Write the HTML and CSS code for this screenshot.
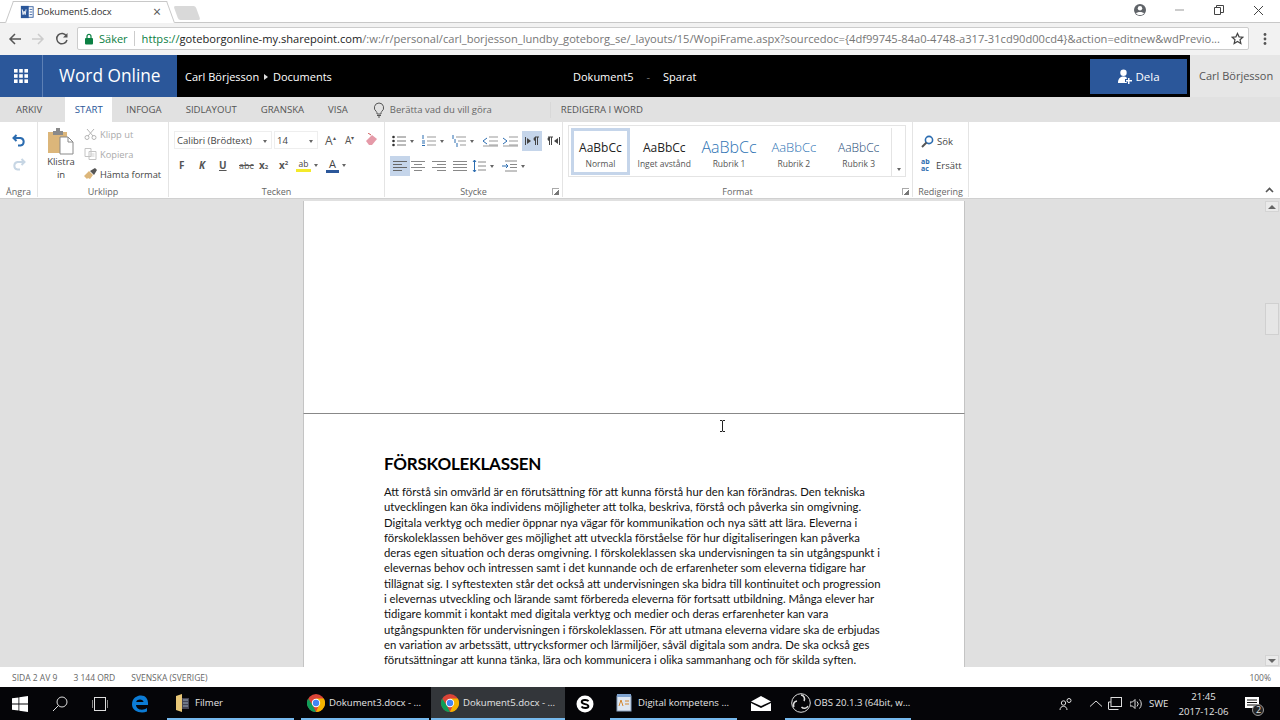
FILE: index.html
```html
<!DOCTYPE html>
<html lang="sv">
<head>
    <meta charset="UTF-8">
    <title>Dokument5.docx</title>
    <link rel="stylesheet" href="styles.css">
</head>
<body>
    <div class="tabstrip">
        <div class="tab">
            <svg class="tab-icon" width="14" height="14" viewBox="0 0 16 16"><rect x="5" y="2" width="10" height="12" fill="#fff" stroke="#2b579a"/><path d="M11 5h3M11 8h3M11 11h3" stroke="#2b579a"/><rect x="1" y="1" width="9" height="14" fill="#2b579a"/><path d="M2.500 5l1 6 1.200-4 1.200 4 1-6" fill="none" stroke="#fff"/></svg>
            <span class="tab-title">Dokument5.docx</span>
            <span class="tab-close">×</span>
        </div>
        <div class="tab-new"></div>
        <div class="win-buttons">
            <svg class="win-user" width="14" height="14" viewBox="0 0 14 14"><circle cx="7" cy="7" r="6" fill="#5f6368"/><circle cx="7" cy="5.200" r="2.200" fill="#fff"/><path d="M3 10.500c1-2 7-2 8 0-2 2-6 2-8 0z" fill="#fff"/></svg>
            <svg class="win-min" width="10" height="10" viewBox="0 0 10 10"><path d="M0 5h9" stroke="#999"/></svg>
            <svg class="win-max" width="10" height="10" viewBox="0 0 10 10"><path d="M.5 2.500h6v7h-6zM2.500 2.500v-2h7v7h-3" fill="none" stroke="#444"/></svg>
            <svg class="win-close" width="11" height="11" viewBox="0 0 11 11"><path d="M1 1l9 9M10 1l-9 9" stroke="#444"/></svg>
        </div>
    </div>

    <div class="toolbar">
        <svg width="14" height="14" viewBox="0 0 14 14"><path d="M13 7H2M7 2L2 7l5 5" fill="none" stroke="#555" stroke-width="1.500"/></svg>
        <svg class="nav-forward" width="14" height="14" viewBox="0 0 14 14"><path d="M1 7h11M7 2l5 5-5 5" fill="none" stroke="#ccc" stroke-width="1.500"/></svg>
        <svg class="nav-reload" width="14" height="14" viewBox="0 0 14 14"><path d="M11.500 4A5.200 5.200 0 1 0 12 8" fill="none" stroke="#555" stroke-width="1.500"/><path d="M12.500 1v4.500H8z" fill="#555"/></svg>
        <div class="omnibox">
            <svg width="10" height="12" viewBox="0 0 10 12"><rect x="1" y="5" width="8" height="6.500" rx="1" fill="#0b8043"/><path d="M3 5V3.400a2 2 0 0 1 4 0V5" fill="none" stroke="#0b8043" stroke-width="1.200"/></svg>
            <span class="secure">Säker</span>
            <span class="omni-sep"></span>
            <span class="url"><span class="url-https">https://</span><span class="url-host">goteborgonline-my.sharepoint.com</span>/:w:/r/personal/carl_borjesson_lundby_goteborg_se/_layouts/15/WopiFrame.aspx?sourcedoc={4df99745-84a0-4748-a317-31cd90d00cd4}&amp;action=editnew&amp;wdPrevio...</span>
            <svg width="13" height="13" viewBox="0 0 14 14"><path d="M7 1.500l1.700 3.700 4 .4-3 2.700.9 4-3.600-2.100-3.600 2.100.9-4-3-2.700 4-.4z" fill="none" stroke="#444" stroke-width="1.300"/></svg>
        </div>
        <svg class="nav-menu" width="4" height="14" viewBox="0 0 4 14"><circle cx="2" cy="2.500" r="1.400" fill="#555"/><circle cx="2" cy="7" r="1.400" fill="#555"/><circle cx="2" cy="11.500" r="1.400" fill="#555"/></svg>
    </div>

    <header class="appbar">
        <div class="waffle">
            <svg width="14" height="14" viewBox="0 0 14 14" fill="#fff"><rect width="3.600" height="3.600"/><rect x="5.200" width="3.600" height="3.600"/><rect x="10.400" width="3.600" height="3.600"/><rect y="5.200" width="3.600" height="3.600"/><rect x="5.200" y="5.200" width="3.600" height="3.600"/><rect x="10.400" y="5.200" width="3.600" height="3.600"/><rect y="10.400" width="3.600" height="3.600"/><rect x="5.200" y="10.400" width="3.600" height="3.600"/><rect x="10.400" y="10.400" width="3.600" height="3.600"/></svg>
        </div>
        <div class="brand">Word Online</div>
        <div class="crumbs">Carl Börjesson <span class="crumb-arrow"></span> Documents</div>
        <div class="doc-state"><span>Dokument5</span><span class="state-dash">-</span><span>Sparat</span></div>
        <div class="share">
            <svg width="15" height="15" viewBox="0 0 15 15" fill="#fff"><circle cx="6.500" cy="3.800" r="3.200"/><path d="M1 14c0-4 2-6.500 5.500-6.500 1.500 0 2.500.5 3.300 1.200V10H8v3h1.800v1z"/><path d="M11 9h1.500v2H15v1.500h-2.500V15H11v-2.500H9V11h2z"/></svg>
            Dela
        </div>
        <div class="user">Carl Börjesson</div>
    </header>

    <nav class="ribbon-tabs">
        <span class="rtab">ARKIV</span>
        <span class="rtab rtab-active">START</span>
        <span class="rtab">INFOGA</span>
        <span class="rtab">SIDLAYOUT</span>
        <span class="rtab">GRANSKA</span>
        <span class="rtab">VISA</span>
        <span class="tell">
            <svg width="12" height="16" viewBox="0 0 12 16"><path d="M6 1a4.700 4.700 0 0 0-2.700 8.500c.7.600.7 1.500.7 2.500h4c0-1 0-1.900.7-2.500A4.700 4.700 0 0 0 6 1zM4 13.500h4M5 15h2" fill="none" stroke="#555"/></svg>
            Berätta vad du vill göra
        </span>
        <span class="rtab rtab-word">REDIGERA I WORD</span>
    </nav>

    <section class="ribbon">
        <div class="group g-undo">
            <div class="group-body undo-body">
                <svg width="14" height="13" viewBox="0 0 14 13"><path d="M4.500 1L1.500 4l3 3M2 4h6.500a3.800 3.800 0 0 1 0 7.500H6" fill="none" stroke="#2b6cb0" stroke-width="2"/></svg>
                <svg width="14" height="13" viewBox="0 0 14 13"><path d="M9.500 1l3 3-3 3M12 4H5.500a3.800 3.800 0 0 0 0 7.500H8" fill="none" stroke="#c7d6e4" stroke-width="2"/></svg>
            </div>
            <div class="group-label">Ångra</div>
        </div>
        <div class="group g-clip">
            <div class="group-body clip-body">
                <div class="paste">
                    <svg width="28" height="27" viewBox="0 0 28 27"><path d="M1 4h19v21H1z" fill="#dcb67a"/><path d="M6 3h3V0h4v3h3v4H6z" fill="#8a8a8a"/><path d="M13 9h8l5 5v12H13z" fill="#fff" stroke="#8a8a8a"/><path d="M21 9v5h5" fill="none" stroke="#8a8a8a"/></svg>
                    <span>Klistra<br>in</span>
                </div>
                <div class="clip-list">
                    <div class="clip-item clip-off"><svg width="14" height="12" viewBox="0 0 14 12"><circle cx="3" cy="9.500" r="2" fill="none" stroke="#b5b5b5"/><circle cx="10" cy="9.500" r="2" fill="none" stroke="#b5b5b5"/><path d="M4 8l6-7M9 8L3 1" stroke="#b5b5b5"/></svg>Klipp ut</div>
                    <div class="clip-item clip-off"><svg width="14" height="12" viewBox="0 0 14 12"><path d="M1 .5h6v8H1zM5 3.500h7v8H5z" fill="#fff" stroke="#c4c4c4"/><path d="M6.500 6h4M6.500 8h4" stroke="#d0d0d0"/></svg>Kopiera</div>
                    <div class="clip-item"><svg width="14" height="12" viewBox="0 0 14 12"><path d="M0 8l5-5 4 4-3 4-2-1-1 1z" fill="#dcb67a"/><path d="M6 3l4 4 3-5-2-2z" fill="#555"/></svg>Hämta format</div>
                </div>
            </div>
            <div class="group-label">Urklipp</div>
        </div>
        <div class="group g-font">
            <div class="group-body font-body">
                <div class="tool-row">
                    <span class="combo combo-font">Calibri (Brödtext)<i class="caret"></i></span>
                    <span class="combo combo-size">14<i class="caret"></i></span>
                    <span class="grow-btn">A<sup>▴</sup></span>
                    <span class="shrink-btn">A<sup>▾</sup></span>
                    <svg width="14" height="14" viewBox="0 0 14 14"><path d="M1 8l6-6 5 4-5 6H4z" fill="#e59aa8"/><path d="M6 2L3 0" stroke="#c55"/></svg>
                </div>
                <div class="tool-row fmt-row">
                    <b class="fmt">F</b>
                    <b class="fmt"><i>K</i></b>
                    <b class="fmt"><u>U</u></b>
                    <span class="fmt fmt-strike">abc</span>
                    <b class="fmt">x<small>2</small></b>
                    <b class="fmt">x<sup>2</sup></b>
                    <span class="fmt-color fmt-mark"><span class="mark-glyph">ab</span><i class="caret"></i></span>
                    <span class="fmt-color"><span class="font-color">A</span><i class="caret"></i></span>
                </div>
            </div>
            <div class="group-label">Tecken</div>
        </div>
        <div class="group g-para">
            <div class="group-body para-body">
                <div class="tool-row para-row para-row-a">
                    <span class="para-btn"><svg width="14" height="12" viewBox="0 0 14 12"><path d="M5 2h9M5 6h9M5 10h9" stroke="#777"/><circle cx="1.500" cy="2" r="1.300" fill="#333"/><circle cx="1.500" cy="6" r="1.300" fill="#333"/><circle cx="1.500" cy="10" r="1.300" fill="#333"/></svg><i class="caret"></i></span>
                    <span class="para-btn"><svg width="14" height="12" viewBox="0 0 14 12"><path d="M5 2h9M5 6h9M5 10h9" stroke="#999"/><path d="M1 0v4M0 6h3M0 8h3M0 10.500h3" stroke="#2b6cb0"/></svg><i class="caret"></i></span>
                    <span class="para-btn"><svg width="14" height="12" viewBox="0 0 14 12"><path d="M4 2h10M6 6h8M8 10h6" stroke="#999"/><path d="M1 0v4M3 4v4M5 8v4" stroke="#2b6cb0"/></svg><i class="caret"></i></span>
                    <svg class="para-ico" width="16" height="12" viewBox="0 0 16 12"><path d="M7 2h9M7 6h9M7 10h9M1 11h15" stroke="#999"/><path d="M5 3L1 6l4 3" fill="none" stroke="#2b6cb0"/></svg>
                    <svg class="para-ico" width="16" height="12" viewBox="0 0 16 12"><path d="M7 2h9M7 6h9M7 10h9M1 11h15" stroke="#999"/><path d="M1 3l4 3-4 3" fill="none" stroke="#2b6cb0"/></svg>
                    <span class="para-on"><svg width="14" height="10" viewBox="0 0 14 10"><path d="M.5 1v8" stroke="#444"/><path d="M2 2l4 3-4 3z" fill="#444"/><path d="M10 1h4M10.500 1v8M12.500 1v8" stroke="#444"/><path d="M10.500 1a2 2 0 0 0 0 4z" fill="#444"/></svg></span>
                    <svg class="para-rtl" width="14" height="10" viewBox="0 0 14 10"><path d="M13.500 1v8" stroke="#444"/><path d="M12 2L8 5l4 3z" fill="#444"/><path d="M2 1h5M3.500 1v8M5.500 1v8" stroke="#444"/><path d="M3.500 1a2 2 0 0 0 0 4z" fill="#444"/></svg>
                </div>
                <div class="tool-row para-row para-row-b">
                    <span class="para-on"><svg width="14" height="12" viewBox="0 0 14 12"><path d="M0 1.500h14M0 4.500h9M0 7.500h14M0 10.500h9" stroke="#666"/></svg></span>
                    <svg class="para-ico" width="14" height="12" viewBox="0 0 14 12"><path d="M0 1.500h14M3 4.500h8M0 7.500h14M3 10.500h8" stroke="#888"/></svg>
                    <svg class="para-ico" width="14" height="12" viewBox="0 0 14 12"><path d="M0 1.500h14M5 4.500h9M0 7.500h14M5 10.500h9" stroke="#888"/></svg>
                    <svg class="para-ico" width="14" height="12" viewBox="0 0 14 12"><path d="M0 1.500h14M0 4.500h14M0 7.500h14M0 10.500h14" stroke="#888"/></svg>
                    <span class="para-btn para-spacing"><svg width="14" height="14" viewBox="0 0 14 14"><path d="M6 3h8M6 7h8M6 11h8" stroke="#888"/><path d="M2.500 1v12M1 3l1.500-2L4 3M1 11l1.500 2L4 11" fill="none" stroke="#2b6cb0"/></svg><i class="caret"></i></span>
                    <span class="para-btn"><svg width="15" height="12" viewBox="0 0 15 12"><path d="M3 1h12M8 4.500h7M8 7.500h7M3 11h12" stroke="#888"/><path d="M0 6h6M4 4l2 2-2 2" fill="none" stroke="#2b6cb0"/></svg><i class="caret"></i></span>
                </div>
            </div>
            <div class="group-label">Stycke<span class="launcher"></span></div>
        </div>
        <div class="group g-styles">
            <div class="group-body styles-body">
                <div class="gallery">
                    <div class="style-item style-on"><span class="sample">AaBbCc</span><span class="style-name">Normal</span></div>
                    <div class="style-item"><span class="sample">AaBbCc</span><span class="style-name">Inget avstånd</span></div>
                    <div class="style-item"><span class="sample s-h1">AaBbCc</span><span class="style-name">Rubrik 1</span></div>
                    <div class="style-item"><span class="sample s-h2">AaBbCc</span><span class="style-name">Rubrik 2</span></div>
                    <div class="style-item"><span class="sample s-h3">AaBbCc</span><span class="style-name">Rubrik 3</span></div>
                    <div class="gallery-more"><i class="caret"></i></div>
                </div>
            </div>
            <div class="group-label">Format<span class="launcher"></span></div>
        </div>
        <div class="group g-edit">
            <div class="group-body edit-body">
                <div class="edit-item"><svg width="13" height="13" viewBox="0 0 13 13"><circle cx="8" cy="5" r="3.600" fill="none" stroke="#2b6cb0" stroke-width="1.600"/><path d="M5.500 7.500L1 12" stroke="#555" stroke-width="2"/></svg>Sök</div>
                <div class="edit-item"><span class="replace-ico">ab<br>ac</span>Ersätt</div>
            </div>
            <div class="group-label">Redigering</div>
        </div>
        <div class="ribbon-fill">
            <svg width="9" height="6" viewBox="0 0 9 6"><path d="M1 5l3.500-3.500L8 5" fill="none" stroke="#555" stroke-width="1.600"/></svg>
        </div>
    </section>

    <main class="doc-area">
        <div class="doc-scroll">
            <div class="page page-top"></div>
            <div class="page page-main">
                <h1 class="doc-heading">FÖRSKOLEKLASSEN</h1>
                <p class="doc-text">
                    <span>Att förstå sin omvärld är en förutsättning för att kunna förstå hur den kan förändras. Den tekniska</span>
                    <span>utvecklingen kan öka individens möjligheter att tolka, beskriva, förstå och påverka sin omgivning.</span>
                    <span>Digitala verktyg och medier öppnar nya vägar för kommunikation och nya sätt att lära. Eleverna i</span>
                    <span>förskoleklassen behöver ges möjlighet att utveckla förståelse för hur digitaliseringen kan påverka</span>
                    <span>deras egen situation och deras omgivning. I förskoleklassen ska undervisningen ta sin utgångspunkt i</span>
                    <span>elevernas behov och intressen samt i det kunnande och de erfarenheter som eleverna tidigare har</span>
                    <span>tillägnat sig. I syftestexten står det också att undervisningen ska bidra till kontinuitet och progression</span>
                    <span>i elevernas utveckling och lärande samt förbereda eleverna för fortsatt utbildning. Många elever har</span>
                    <span>tidigare kommit i kontakt med digitala verktyg och medier och deras erfarenheter kan vara</span>
                    <span>utgångspunkten för undervisningen i förskoleklassen. För att utmana eleverna vidare ska de erbjudas</span>
                    <span>en variation av arbetssätt, uttrycksformer och lärmiljöer, såväl digitala som andra. De ska också ges</span>
                    <span>förutsättningar att kunna tänka, lära och kommunicera i olika sammanhang och för skilda syften.</span>
                </p>
            </div>
        </div>
        <div class="scrollbar">
            <div class="sb-btn"><i class="sb-up"></i></div>
            <div class="sb-thumb"></div>
            <div class="sb-btn"><i class="sb-down"></i></div>
        </div>
        <svg class="ibeam" width="7" height="12" viewBox="0 0 7 12"><path d="M1 .5h2l.5.5.5-.5h2M3.500 1v10M1 11.500h2l.5-.5.5.5h2" fill="none" stroke="#222"/></svg>
    </main>

    <footer class="statusbar">
        <span>SIDA 2 AV 9</span>
        <span>3 144 ORD</span>
        <span>SVENSKA (SVERIGE)</span>
        <span class="zoom">100%</span>
    </footer>

    <div class="taskbar">
        <span class="tb-icon"><svg width="16" height="16" viewBox="0 0 16 16" fill="#fff"><path d="M0 2.300l6.500-.9v6.200H0zM7.300 1.300L16 0v7.600H7.300zM0 8.400h6.500v6.200L0 13.700zM7.300 8.400H16V16l-8.700-1.200z"/></svg></span>
        <span class="tb-icon"><svg width="16" height="16" viewBox="0 0 16 16"><circle cx="10" cy="6" r="5" fill="none" stroke="#ddd"/><path d="M6.500 9.500L1 15" stroke="#ddd"/></svg></span>
        <span class="tb-icon"><svg width="16" height="14" viewBox="0 0 16 14"><rect x="2.500" y=".5" width="11" height="13" fill="none" stroke="#ddd"/><path d="M.5 3v8M15.500 3v8" stroke="#888"/></svg></span>
        <span class="tb-icon"><svg width="18" height="18" viewBox="0 0 18 18"><path d="M17 10H5c.3 5 7 6 11 3v3.500C10 19 1 16.500 1 9.500 1 3 6 .5 10 .5c5 0 7.500 4 7 9.500zM12.500 7c0-3-6.500-3.500-7.300 0z" fill="#0c7cd5"/></svg></span>
        <div class="tb-app tb-filmer">
            <svg width="13" height="18" viewBox="0 0 13 18"><path d="M0 2l6-2v18l-6-2z" fill="#e8c777"/><rect x="6" y="4" width="7" height="11" fill="#445"/><path d="M7 6h5M7 9h5M7 12h5" stroke="#9ab"/></svg>
            <span>Filmer</span>
        </div>
        <div class="tb-app tb-doc3">
            <svg width="18" height="18" viewBox="0 0 18 18"><circle cx="9" cy="9" r="9" fill="#db4437"/><path d="M9 18A9 9 0 0 1 1.200 4.500L5.500 11z" fill="#0f9d58"/><path d="M9 18a9 9 0 0 0 7.800-13.500H9l3 6.500z" fill="#f4b400"/><circle cx="9" cy="9" r="4.200" fill="#fff"/><circle cx="9" cy="9" r="3.200" fill="#4285f4"/></svg>
            <span>Dokument3.docx - ...</span>
        </div>
        <div class="tb-app tb-doc5">
            <svg width="18" height="18" viewBox="0 0 18 18"><circle cx="9" cy="9" r="9" fill="#db4437"/><path d="M9 18A9 9 0 0 1 1.200 4.500L5.500 11z" fill="#0f9d58"/><path d="M9 18a9 9 0 0 0 7.800-13.500H9l3 6.500z" fill="#f4b400"/><circle cx="9" cy="9" r="4.200" fill="#fff"/><circle cx="9" cy="9" r="3.200" fill="#4285f4"/></svg>
            <span>Dokument5.docx - ...</span>
        </div>
        <span class="tb-skype"><svg width="18" height="18" viewBox="0 0 18 18"><circle cx="9" cy="9" r="8.500" fill="#fff"/><path d="M12.500 6.300C11.500 4.500 5.700 4.500 5.700 7c0 2.700 6.700 1.500 6.700 4.200 0 2.300-5.600 2.300-6.900.2" fill="none" stroke="#000" stroke-width="1.900"/></svg></span>
        <div class="tb-app tb-digital">
            <svg width="16" height="18" viewBox="0 0 16 18"><rect x="1" y="2" width="14" height="15" fill="#dfe7f1" stroke="#8aa3c2"/><rect x="1" y="0" width="14" height="3" fill="#7fa3cf"/><path d="M3 12l2-6 2 6M9 7h4M9 10h4" fill="none" stroke="#d4872f"/></svg>
            <span>Digital kompetens ...</span>
        </div>
        <span class="tb-mail"><svg width="20" height="15" viewBox="0 0 20 15"><path d="M0 5.500L10 0l10 5.500L10 10z" fill="#fff"/><path d="M0 7l10 5 10-5v8H0z" fill="#fff"/></svg></span>
        <div class="tb-app tb-obs">
            <svg width="20" height="20" viewBox="0 0 20 20"><circle cx="10" cy="10" r="9.300" fill="none" stroke="#ddd"/><path d="M10 2a4 4 0 0 1 3 6M17 13a4 4 0 0 1-6.500 1M3 14a4 4 0 0 1 3-6" fill="none" stroke="#ddd" stroke-width="1.600"/></svg>
            <span>OBS 20.1.3 (64bit, w...</span>
        </div>
        <div class="tray">
            <svg width="14" height="14" viewBox="0 0 14 14"><circle cx="4.500" cy="6" r="2.200" fill="none" stroke="#ddd"/><circle cx="10" cy="3.500" r="2" fill="none" stroke="#ddd"/><path d="M1 13c0-5 7-5 7 0" fill="none" stroke="#ddd"/></svg>
            <svg class="tray-chev" width="14" height="7" viewBox="0 0 14 7"><path d="M1 6.500L7 1l6 5.500" fill="none" stroke="#ddd"/></svg>
            <svg class="tray-net" width="14" height="13" viewBox="0 0 14 13"><rect x="3" y=".5" width="10.500" height="9" fill="none" stroke="#ddd"/><path d="M.5 12.500h10M3 5H.5v7" fill="none" stroke="#ddd"/></svg>
            <svg class="tray-vol" width="13" height="12" viewBox="0 0 13 12"><path d="M0 4h2.500L5 1.500v9L2.500 8H0z" fill="none" stroke="#ddd"/><path d="M7 3.500a3.500 3.500 0 0 1 0 5M9.500 1.500a6.500 6.500 0 0 1 0 9" fill="none" stroke="#ddd"/></svg>
            <span class="tray-lang">SWE</span>
            <span class="clock">21:45<br>2017-12-06</span>
            <span class="notify">
                <svg width="15" height="14" viewBox="0 0 15 14"><path d="M0 0h14v11H0z" fill="#fff"/><path d="M2 3h10M2 5.500h10M2 8h10" stroke="#111"/></svg>
                <span class="notify-count">2</span>
            </span>
        </div>
    </div>
</body>
</html>
```

FILE: styles.css
```css
* {
    box-sizing: border-box;
}
html, body {
    margin: 0;
    height: 720px;
    overflow: hidden;
}
body {
    display: flex;
    flex-direction: column;
    font-family: "Open Sans", "Liberation Sans", sans-serif;
    font-size: 10px;
    color: #444;
    background: #fff;
}
svg {
    display: block;
    flex: none;
}

/* browser chrome */
.tabstrip {
    height: 23px;
    flex: none;
    display: flex;
    align-items: flex-end;
    background: #fff;
    border-bottom: 1px solid #c8c8c8;
}
.tab {
    position: relative;
    width: 170px;
    height: 23px;
    margin-left: 5px;
    display: flex;
    align-items: center;
    padding: 0 14px 0 15px;
    gap: 3px;
    background: #fff;
    transform: translateY(1px);
}
.tab::before, .tab::after {
    content: "";
    position: absolute;
    top: 1px;
    bottom: 0;
    width: 50%;
    background: #fff;
    border-top: 1px solid #c8c8c8;
}
.tab::before {
    left: 0;
    border-left: 1px solid #c8c8c8;
    transform-origin: bottom left;
    transform: skewX(-20deg);
}
.tab::after {
    right: 0;
    border-right: 1px solid #c8c8c8;
    transform-origin: bottom right;
    transform: skewX(20deg);
}
.tab > * {
    position: relative;
    z-index: 1;
}
.tab-title {
    font-size: 9.400px;
    color: #333;
    flex: 1;
}
.tab-close {
    font-size: 14px;
    color: #555;
}
.tab-new {
    width: 22px;
    height: 14px;
    margin: 0 0 2px 1px;
    background: #d9d9d9;
    border-radius: 2px;
    transform: skewX(20deg);
}
.win-buttons {
    margin-left: auto;
    height: 20px;
    margin-bottom: 2px;
    display: flex;
    align-items: center;
    padding-right: 16px;
}
.win-user {
    margin-right: 28px;
}
.win-min, .win-max {
    margin-right: 29px;
}
.toolbar {
    height: 32px;
    flex: none;
    display: flex;
    align-items: center;
    padding: 0 0 1px 8px;
    background: #f2f2f2;
}
.nav-forward {
    margin-left: 9px;
}
.nav-reload {
    margin-left: 10px;
}
.omnibox {
    width: 1172px;
    height: 23px;
    margin-left: 8px;
    display: flex;
    align-items: center;
    padding: 0 4px 0 6px;
    background: #fff;
    border: 1px solid #ccc;
    border-radius: 2px;
}
.secure {
    margin-left: 5px;
    font-size: 11px;
    color: #0b8043;
}
.omni-sep {
    width: 1px;
    height: 15px;
    margin: 0 7px 0 6px;
    background: #ccc;
}
.url {
    flex: 1;
    font-size: 11.120px;
    color: #767676;
    white-space: nowrap;
    overflow: hidden;
}
.url-https {
    color: #0b8043;
}
.url-host {
    color: #222;
}
.nav-menu {
    margin-left: 14px;
}

/* office header */
.appbar {
    height: 42px;
    flex: none;
    display: flex;
    align-items: center;
    color: #fff;
    background: #000;
    font-size: 11px;
}
.waffle {
    width: 43px;
    height: 100%;
    display: flex;
    align-items: center;
    justify-content: center;
    background: #2b579a;
    border-right: 1px solid #5d80b5;
}
.brand {
    width: 134px;
    height: 100%;
    padding-left: 16px;
    font-size: 17.300px;
    line-height: 42px;
    background: #2b579a;
}
.crumbs {
    width: 396px;
    padding-left: 8px;
}
.crumb-arrow {
    display: inline-block;
    margin: 0 2px 1px;
    border-left: 4px solid #ddd;
    border-top: 3px solid transparent;
    border-bottom: 3px solid transparent;
}
.doc-state {
    width: 517px;
    display: flex;
    gap: 13px;
}
.state-dash {
    color: #777;
}
.share {
    width: 97px;
    height: 35px;
    display: flex;
    align-items: center;
    justify-content: center;
    gap: 3px;
    background: #2b579a;
    font-size: 11.500px;
}
.user {
    width: 90px;
    height: 100%;
    margin-left: 3px;
    padding-left: 9px;
    line-height: 42px;
    color: #555;
    background: #e6e6e6;
}

/* ribbon */
.ribbon-tabs {
    height: 25px;
    flex: none;
    display: flex;
    align-items: center;
    background: #e1e1e1;
    color: #555;
    padding-left: 4px;
}
.rtab {
    height: 100%;
    padding: 0 12px;
    line-height: 25px;
    font-size: 9.600px;
}
.rtab-active {
    width: 47px;
    margin: 0 2px 0 11px;
    text-align: center;
    padding: 0;
    background: #fff;
    color: #2b579a;
}
.tell {
    width: 178px;
    margin-left: 13px;
    display: flex;
    align-items: center;
    gap: 5px;
    color: #666;
    font-size: 9.500px;
    border-right: 1px solid #d8d8d8;
}
.rtab-word {
    padding-left: 10px;
}
.ribbon {
    height: 77px;
    flex: none;
    display: flex;
    background: #fff;
    border-bottom: 1px solid #d0d0d0;
}
.group {
    display: flex;
    flex-direction: column;
    height: 75px;
    border-right: 1px solid #e4e4e4;
}
.group-body {
    flex: none;
    height: 62px;
}
.group-label {
    position: relative;
    height: 13px;
    line-height: 16px;
    text-align: center;
    font-size: 9px;
    color: #666;
}
.launcher {
    position: absolute;
    right: 3px;
    top: 4px;
    width: 7px;
    height: 7px;
    border-left: 1px solid #aaa;
    border-top: 1px solid #aaa;
    background: linear-gradient(135deg, transparent 55%, #777 55%);
}
.g-undo {
    width: 38px;
}
.undo-body {
    display: flex;
    flex-direction: column;
    align-items: center;
    gap: 11px;
    padding-top: 12px;
}
.g-clip {
    width: 131px;
}
.clip-body {
    display: flex;
}
.paste {
    width: 46px;
    display: flex;
    flex-direction: column;
    align-items: center;
    padding-top: 6px;
    font-size: 9.500px;
    line-height: 13px;
    text-align: center;
    color: #444;
}
.clip-list {
    padding-top: 2px;
}
.clip-item {
    height: 20px;
    display: flex;
    align-items: center;
    gap: 2px;
    font-size: 9.300px;
    color: #444;
}
.clip-off {
    color: #aaa;
}
.g-font {
    width: 216px;
}
.font-body {
    padding: 9px 0 0 5px;
}
.tool-row {
    display: flex;
    align-items: center;
}
.combo {
    position: relative;
    height: 18px;
    line-height: 17px;
    font-size: 9.500px;
    padding-left: 2px;
    color: #444;
    border: 1px solid #eee;
}
.combo .caret {
    position: absolute;
    right: 4px;
    top: 8px;
}
.combo-font {
    width: 98px;
}
.combo-size {
    width: 44px;
    margin-left: 2px;
}
.caret {
    display: inline-block;
    border-top: 3px solid #666;
    border-left: 2px solid transparent;
    border-right: 2px solid transparent;
}
.grow-btn, .shrink-btn {
    margin-left: 7px;
    font-size: 12px;
    color: #555;
    width: 20px;
}
.grow-btn sup, .shrink-btn sup {
    font-size: 6px;
    color: #555;
}
.shrink-btn {
    font-size: 10px;
    margin-left: 0;
}
.fmt-row {
    margin-top: 6px;
    padding-left: 5px;
    height: 20px;
}
.fmt {
    width: 20px;
    font-size: 10px;
    color: #555;
}
.fmt small, .fmt sup {
    font-size: 6px;
}
.fmt-strike {
    text-decoration: line-through;
    font-size: 9px;
}
.fmt-color {
    width: 30px;
    display: flex;
    align-items: center;
    gap: 3px;
}
.fmt-mark {
    margin-left: -3px;
}
.mark-glyph {
    width: 15px;
    text-align: center;
    font-size: 8.500px;
    line-height: 11px;
    border-bottom: 3px solid #f4ea2a;
}
.font-color {
    width: 13px;
    text-align: center;
    font-size: 11px;
    line-height: 13px;
    border-bottom: 3px solid #2b579a;
}
.g-para {
    width: 178px;
}
.para-body {
    padding: 9px 0 0 5px;
}
.para-row {
    height: 20px;
}
.para-row-a {
    padding-left: 2px;
}
.para-row-b {
    margin-top: 5px;
}
.para-btn {
    display: flex;
    align-items: center;
    gap: 4px;
    width: 30px;
}
.para-ico {
    margin-right: 4px;
}
.para-rtl {
    margin-left: 4px;
}
.para-on {
    width: 20px;
    height: 20px;
    display: flex;
    align-items: center;
    justify-content: center;
    background: #c5d5ea;
}
.para-row-b .para-on {
    margin-right: 1px;
}
.para-row-b .para-ico {
    margin-right: 7px;
}
.para-spacing {
    margin-left: -2px;
}
.g-styles {
    width: 350px;
}
.styles-body {
    padding: 3px 0 0 5px;
}
.gallery {
    width: 338px;
    height: 52px;
    display: flex;
    border: 1px solid #e4e4e4;
    padding: 2px 0 0 2px;
}
.style-item {
    width: 65px;
    display: flex;
    flex-direction: column;
    align-items: center;
    padding-top: 9px;
    white-space: nowrap;
}
.style-on {
    width: 59px;
    height: 47px;
    margin-right: 2px;
    border: 3px solid #c5d5ea;
    padding-top: 6px;
}
.sample {
    height: 21px;
    line-height: 21px;
    font-size: 12px;
    color: #222;
}
.s-h1 {
    font-size: 16px;
    font-weight: 300;
    color: #2e74b5;
}
.s-h2 {
    font-size: 13px;
    font-weight: 300;
    color: #2e74b5;
}
.s-h3 {
    font-size: 12px;
    font-weight: 300;
    color: #1f4d78;
}
.style-name {
    line-height: 11px;
    font-size: 8.500px;
    color: #555;
}
.gallery-more {
    width: 14px;
    margin-left: auto;
    display: flex;
    align-items: flex-end;
    justify-content: center;
    padding-bottom: 5px;
    border-left: 1px solid #e4e4e4;
}
.g-edit {
    width: 56px;
}
.edit-body {
    padding: 7px 0 0 8px;
}
.edit-item {
    height: 24px;
    display: flex;
    align-items: center;
    gap: 3px;
    font-size: 9.500px;
    color: #444;
}
.replace-ico {
    width: 13px;
    margin-right: -1px;
    font-size: 7px;
    line-height: 7px;
    color: #2b6cb0;
    font-weight: bold;
}
.ribbon-fill {
    flex: 1;
    display: flex;
    justify-content: flex-end;
    align-items: flex-end;
    padding: 0 6px 5px 0;
}

/* document */
.doc-area {
    position: relative;
    height: 468px;
    flex: none;
    display: flex;
    background: #e0e0e0;
    overflow: hidden;
}
.doc-scroll {
    flex: 1;
    padding: 2px 0 0 303px;
}
.page {
    width: 662px;
    background: #fff;
    border-left: 1px solid #c4c4c4;
    border-right: 1px solid #c4c4c4;
}
.page-top {
    height: 213px;
    border-bottom: 1px solid #888;
}
.page-main {
    height: 260px;
    padding: 38px 0 0 80px;
}
.doc-heading {
    margin: 0;
    height: 32px;
    font-family: "Lato", sans-serif;
    font-size: 17px;
    letter-spacing: -0.23px;
    line-height: 24px;
    font-weight: 700;
    color: #000;
}
.doc-text {
    margin: 0;
    font-family: "Lato", sans-serif;
    font-size: 11.320px;
    line-height: 15.300px;
    color: #111;
}
.doc-text span {
    display: block;
    white-space: nowrap;
}
.scrollbar {
    width: 14px;
    margin-right: 1px;
    padding-top: 2px;
    display: flex;
    flex-direction: column;
}
.sb-btn {
    height: 11px;
    flex: none;
    display: flex;
    align-items: center;
    justify-content: center;
    background: #eaeaea;
    border: 1px solid #d4d4d4;
}
.sb-up {
    border-bottom: 4px solid #666;
    border-left: 4px solid transparent;
    border-right: 4px solid transparent;
}
.sb-down {
    border-top: 4px solid #666;
    border-left: 4px solid transparent;
    border-right: 4px solid transparent;
}
.sb-thumb {
    height: 32px;
    flex: none;
    margin: 91px 0 320px;
    background: #e6e6e6;
    border: 1px solid #d0d0d0;
}
.ibeam {
    position: absolute;
    left: 719px;
    top: 221px;
}
.statusbar {
    height: 20px;
    flex: none;
    display: flex;
    align-items: center;
    gap: 16px;
    padding: 0 12px;
    font-size: 8.500px;
    color: #666;
    background: #fff;
}
.zoom {
    margin-left: auto;
    margin-right: -3px;
}

/* windows taskbar */
.taskbar {
    height: 33px;
    flex: none;
    display: flex;
    align-items: stretch;
    color: #e4e4e4;
    background: #050508;
    font-size: 9.600px;
}
.tb-icon {
    width: 40px;
    flex: none;
    display: flex;
    align-items: center;
    justify-content: center;
}
.tb-app {
    flex: none;
    display: flex;
    align-items: center;
    gap: 4px;
    white-space: nowrap;
    border-bottom: 2px solid #76b9ed;
}
.tb-filmer {
    width: 127px;
    margin-left: 7px;
    padding-left: 9px;
    gap: 6px;
}
.tb-doc3 {
    width: 128px;
    margin-left: 7px;
    padding-left: 6px;
}
.tb-doc5 {
    width: 134px;
    margin-left: 2px;
    padding-left: 10px;
    background: #33363a;
}
.tb-skype {
    width: 40px;
    margin-right: 5px;
    flex: none;
    display: flex;
    align-items: center;
    justify-content: center;
}
.tb-digital {
    width: 127px;
    padding-left: 6px;
    gap: 6px;
}
.tb-mail {
    width: 48px;
    flex: none;
    display: flex;
    align-items: center;
    justify-content: center;
}
.tb-obs {
    width: 126px;
    padding-left: 6px;
    gap: 3px;
}
.tray {
    flex: 1;
    display: flex;
    align-items: center;
    padding-left: 148px;
}
.tray-chev {
    margin-left: 16px;
}
.tray-net {
    margin-left: 5px;
}
.tray-vol {
    margin-left: 8px;
}
.tray-lang {
    margin-left: 6px;
}
.clock {
    width: 54px;
    margin-left: 8px;
    text-align: center;
    line-height: 15px;
}
.notify {
    position: relative;
    margin-left: 15px;
}
.notify-count {
    position: absolute;
    left: 7px;
    top: 7px;
    width: 12px;
    height: 12px;
    line-height: 10px;
    text-align: center;
    border-radius: 50%;
    font-size: 9px;
    background: #222;
    border: 1px solid #999;
}
```
